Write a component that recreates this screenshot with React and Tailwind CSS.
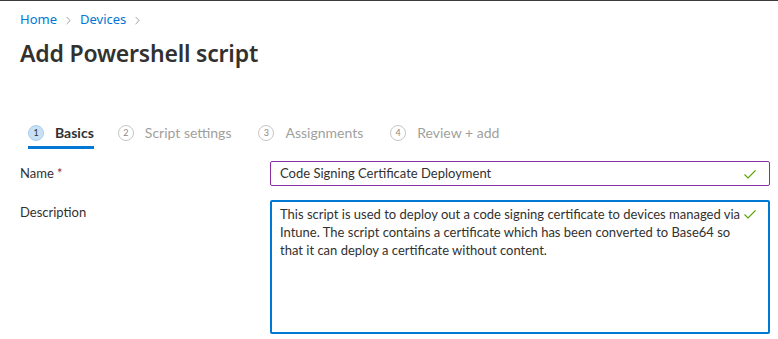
import { ChevronRight } from "lucide-react";

const steps = [
  { n: 1, label: "Basics", active: true },
  { n: 2, label: "Script settings" },
  { n: 3, label: "Assignments" },
  { n: 4, label: "Review + add" },
];

const Check = () => (
  <svg width="14" height="14" viewBox="0 0 14 14" className="shrink-0">
    <path d="M1.5 7.5 L5 11 L12.5 3.5" fill="none" stroke="#57a300" strokeWidth="1.1" />
  </svg>
);

const App = () => {
  return (
    <div
      className="w-[778px] h-[339px] bg-white border-t border-[#3b3b3b] text-[#323130] overflow-hidden"
      style={{ fontFamily: '"Noto Sans", "Open Sans", sans-serif' }}
    >
      <div className="px-5 pt-[10px]">
        <div className="flex items-center text-[13px] text-[#0078d4] h-[18px]">
          <span>Home</span>
          <ChevronRight size={13} className="text-[#8a8886] mx-[5px]" strokeWidth={1.5} />
          <span>Devices</span>
          <ChevronRight size={13} className="text-[#8a8886] mx-[5px]" strokeWidth={1.5} />
        </div>
        <h1 className="text-[23px] font-semibold mt-[9px] leading-[30px] tracking-[-0.2px]">
          Add Powershell script
        </h1>
      </div>

      <div className="flex items-center pl-[28px] mt-[51px] h-[30px]" style={{ fontFamily: '"Lato", sans-serif' }}>
        {steps.map((s) => (
          <div
            key={s.n}
            className={`flex items-center gap-[11px] h-full border-b-[3px] ${
              s.active ? "border-[#0078d4] mr-[24px]" : "border-transparent mr-[27px]"
            }`}
          >
            <span
              className={`w-4 h-4 rounded-full flex items-center justify-center text-[9px] border ${
                s.active
                  ? "bg-[#c7e0f4] border-[#a8cdef] text-[#323130]"
                  : "border-[#c8c6c4] text-[#8a8886]"
              }`}
            >
              {s.n}
            </span>
            <span
              className={`text-[14px] ${
                s.active ? "text-[#323130] font-bold" : "text-[#a19f9d]"
              }`}
            >
              {s.label}
            </span>
          </div>
        ))}
      </div>

      <div
        className="pl-5 pr-2 mt-[12px] flex flex-col gap-[14px] text-[13px]"
        style={{ fontFamily: '"Lato", sans-serif' }}
      >
        <div className="flex items-center">
          <div className="w-[250px]">
            Name <span className="text-[#a4262c]">*</span>
          </div>
          <div className="flex-1 h-[25px] border border-[#8c2ea3] rounded-[2px] flex items-center pl-[9px] pr-[12px]">
            <span className="flex-1">Code Signing Certificate Deployment</span>
            <Check />
          </div>
        </div>
        <div className="flex items-start">
          <div className="w-[250px] pt-[3px]">Description</div>
          <div className="flex-1 h-[134px] border-2 border-[#0078d4] rounded-[2px] flex items-start pl-[8px] pr-[11px] pt-[3px] leading-[18px]">
            <span className="flex-1 whitespace-nowrap">
              This script is used to deploy out a code signing certificate to devices managed via
              <br />
              Intune. The script contains a certificate which has been converted to Base64 so
              <br />
              that it can deploy a certificate without content.
            </span>
            <span className="pt-[2px]">
              <Check />
            </span>
          </div>
        </div>
      </div>
    </div>
  );
};

export default App;
